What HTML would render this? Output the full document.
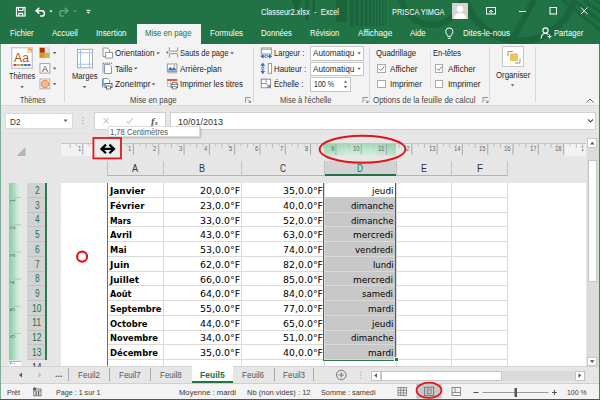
<!DOCTYPE html>
<html><head><meta charset="utf-8"><title>Classeur2.xlsx - Excel</title>
<style>
html,body{margin:0;padding:0}
body{width:600px;height:400px;overflow:hidden;position:relative;background:#e6e6e6;font-family:'Liberation Sans', sans-serif;}
.a{position:absolute;box-sizing:border-box}
.t{position:absolute;white-space:pre;transform-origin:0 50%;line-height:normal}
svg{position:absolute;overflow:visible}
</style></head><body>
<div class="a" style="left:0px;top:0px;width:600px;height:44px;background:#217346;"></div>
<svg style="left:0;top:0" width="600" height="44" viewBox="0 0 600 44"><g fill="#1a6039" opacity=".8"><rect x="305" y="0" width="4" height="20"/><rect x="312.5" y="0" width="2.5" height="13"/><rect x="336" y="0" width="11" height="22"/><rect x="350" y="0" width="3.5" height="26"/><rect x="355.5" y="0" width="3" height="26"/><rect x="360.5" y="0" width="2.6" height="26"/><rect x="365" y="0" width="2.3" height="26"/><rect x="369" y="0" width="2" height="26"/><rect x="372.6" y="0" width="1.8" height="26"/><rect x="376" y="0" width="1.5" height="26"/><rect x="379" y="0" width="1.3" height="26"/><rect x="382" y="0" width="1.1" height="26"/><rect x="385" y="0" width="1" height="26"/><path d="M291 0l5.500 11 5.500-11z"/></g><g fill="none" stroke="#1a6039" opacity=".75"><circle cx="520" cy="-15" r="56" stroke-width="7"/><circle cx="432" cy="-6" r="31" stroke-width="6"/><path d="M562 0l38 30M573 0l27 21M584 0l16 12M595 0l5 4" stroke-width="3.500"/><path d="M534 0l-24 44" stroke-width="6"/></g></svg>
<div class="a" style="left:137px;top:24px;width:63.5px;height:21px;background:#f3f3f3;"></div>
<div class="a" style="left:0px;top:44px;width:600px;height:60.5px;background:#f3f3f3;"></div>
<div class="a" style="left:0px;top:104.5px;width:600px;height:1px;background:#d8d8d8;"></div>
<svg style="left:0;top:0" width="600" height="44" viewBox="0 0 600 44">
<g fill="none" stroke="#fff" stroke-width="1.2">
<rect x="16.5" y="7.5" width="8.5" height="8.5"/><path d="M18.5 7.5v3h4.5v-3M18.8 16v-2.6h3.8v2.6"/>
<path d="M39.3 7.800l-3.200 3 3.200 3M36.300 10.800h5.400a2.700 2.600 0 0 1 0 5.200h-1.500" stroke-width="1.500"/>
<path d="M64.700 7.800l3.200 3 -3.200 3M67.700 10.800h-5.400a2.700 2.600 0 0 0 0 5.200h1.500" stroke-width="1.500" opacity=".32"/>
<path d="M86.500 10.300h3.800" stroke-width="1"/>
</g>
<path d="M49.200 10.500h3.400l-1.700 2.100z" fill="#fff"/>
<path d="M73.300 10.500h3.200l-1.600 2z" fill="#fff" opacity=".32"/>
<path d="M86.500 11.800h3.800l-1.900 2z" fill="#fff"/>
<!-- avatar -->
<rect x="452" y="3" width="16" height="16" fill="#d4d4d4"/>
<circle cx="460" cy="9" r="3.200" fill="#fff"/><path d="M454 19c0-4 2.500-6 6-6s6 2 6 6z" fill="#fff"/>
<!-- ribbon display -->
<g fill="none" stroke="#fff" stroke-width="1"><rect x="486.500" y="7.500" width="9" height="6.500"/><path d="M489 12l2-2 2 2M491 10v3.500" /></g>
<path d="M519 11.500h7" stroke="#fff" stroke-width="1"/>
<rect x="550" y="7.500" width="6.500" height="6.500" fill="none" stroke="#fff" stroke-width="1"/>
<path d="M581 7.500l6.500 6.500M587.500 7.500l-6.500 6.500" stroke="#fff" stroke-width="1"/>
<!-- bulb -->
<g fill="none" stroke="#fff" stroke-width="1"><path d="M447.700 36.300c-.2-1.500-2-2.700-2-4.800a3.600 3.600 0 0 1 7.200 0c0 2.100-1.800 3.300-2 4.800zM447.900 38.300h2.800"/></g>
<!-- share -->
<g fill="none" stroke="#fff" stroke-width="1.100"><circle cx="545.500" cy="30.500" r="2.600"/><path d="M541.200 38.500c0-3 1.800-5 4.300-5 1.200 0 2.200.4 3 1.200M549.500 34.500v4M547.500 36.500h4"/></g>
</svg>
<div class="a" style="left:429.5px;top:50px;width:1px;height:37px;background:#dedede;"></div>
<div class="a" style="left:64px;top:47px;width:1px;height:55px;background:#d8d8d8;"></div>
<div class="a" style="left:252.5px;top:47px;width:1px;height:55px;background:#d8d8d8;"></div>
<div class="a" style="left:368.7px;top:47px;width:1px;height:55px;background:#d8d8d8;"></div>
<div class="a" style="left:489px;top:47px;width:1px;height:55px;background:#d8d8d8;"></div>
<div class="a" style="left:535px;top:47px;width:1px;height:55px;background:#d8d8d8;"></div>
<div class="a" style="left:310px;top:46px;width:54px;height:14.5px;background:#fff;border:1px solid #c6c6c6;"></div>
<div class="a" style="left:310px;top:61.5px;width:54px;height:14.5px;background:#fff;border:1px solid #c6c6c6;"></div>
<div class="a" style="left:310px;top:77px;width:41px;height:14.5px;background:#fff;border:1px solid #c6c6c6;"></div>
<div class="a" style="left:377px;top:64.3px;width:8.6px;height:8.7px;background:#fff;border:1px solid #ababab;"></div>
<div class="a" style="left:377px;top:79.5px;width:8.6px;height:8.7px;background:#fff;border:1px solid #ababab;"></div>
<div class="a" style="left:434.75px;top:64.3px;width:8.6px;height:8.7px;background:#fff;border:1px solid #ababab;"></div>
<div class="a" style="left:434.75px;top:79.5px;width:8.6px;height:8.7px;background:#fff;border:1px solid #ababab;"></div>
<div class="a" style="left:502px;top:46px;width:22px;height:20.5px;background:#fdfdfd;border:1px solid #c6c6c6;"></div>
<svg style="left:0;top:44px" width="600" height="62" viewBox="0 44 600 62">
<!-- dropdown arrows -->
<g fill="#666">
<path d="M20.300 86h3.600l-1.800 2.200z"/><path d="M82.700 86h3.600l-1.800 2.200z"/>
<path d="M52.800 52h3.600l-1.800 2.200z"/><path d="M52.800 67.500h3.600l-1.800 2.200z"/><path d="M52.800 83h3.600l-1.800 2.200z"/>
<path d="M156.300 52.300h3.600l-1.800 2.200z"/><path d="M134 67.500h3.600l-1.800 2.200z"/><path d="M151.800 83.200h3.600l-1.800 2.200z"/>
<path d="M230.300 52.300h3.600l-1.800 2.200z"/>
<path d="M357.300 52.300h3.600l-1.800 2.200z"/><path d="M357.300 67.800h3.600l-1.800 2.200z"/>
<path d="M343.800 82.800h3.400l-1.700-2.200z"/><path d="M343.800 86h3.400l-1.700 2.200z"/>
<path d="M510.800 84.300h3.600l-1.800 2.200z"/>
</g>
<!-- Themes big icon -->
<rect x="11.700" y="47.700" width="20.600" height="20.600" fill="#fff" stroke="#c3c9d6" stroke-width="1.400"/>
<path d="M27.500 48.400h4.100v4.100z" fill="#f0922a"/><path d="M27.500 48.400v4.100h4.100" fill="#fbe0c0" stroke="#e8a868" stroke-width=".5"/>
<text x="14" y="62" font-family="Liberation Sans, sans-serif" font-size="12.500" fill="#b5522d" textLength="15" lengthAdjust="spacingAndGlyphs">Aa</text>
<g><rect x="13.500" y="64" width="3" height="2" fill="#d04030"/><rect x="17" y="64" width="3" height="2" fill="#f0a030"/><rect x="20.500" y="64" width="3" height="2" fill="#50a050"/><rect x="24" y="64" width="3" height="2" fill="#4080c0"/><rect x="27.500" y="64" width="3" height="2" fill="#8050a0"/></g>
<!-- colors -->
<rect x="39.700" y="47.800" width="10" height="10" fill="#e2dfd6" stroke="#c8c4b8" stroke-width=".5"/>
<rect x="39.700" y="47.800" width="5" height="5" fill="#9c3a10"/><rect x="44.700" y="52.800" width="5" height="5" fill="#c4b468"/><rect x="39.700" y="52.800" width="5" height="5" fill="#e8900c"/>
<!-- fonts -->
<rect x="40" y="63.600" width="9.800" height="9.500" fill="#fff" stroke="#9aa4b8" stroke-width="1"/>
<text x="42" y="71.800" font-family="Liberation Sans, sans-serif" font-size="9" fill="#23407a">A</text><path d="M42.300 71.800l1-2.500M47.600 71.800l-1-2.500" stroke="#e8900c" stroke-width="1"/>
<!-- effects -->
<rect x="40" y="79" width="9.800" height="9.800" fill="#fff" stroke="#a8b0c0" stroke-width="1"/>
<circle cx="45" cy="84" r="3.800" fill="#f6b888" stroke="#e8883c" stroke-width="1"/>
<!-- Marges -->
<rect x="77.500" y="49.300" width="15" height="18.500" fill="#fff" stroke="#a0a0a0" stroke-width=".9"/>
<path d="M80.500 49.500v18M89.500 49.500v18M77.500 52.800h15M77.500 64.300h15" stroke="#a4c4ea" stroke-width="1.100"/>
<!-- orientation -->
<path d="M103 48h4.500l2 2v6.500h-6.500z" fill="#fff" stroke="#8a8a8a" stroke-width=".9"/><path d="M105.500 52.500h7v5.500h-7z" fill="#fff" stroke="#8a8a8a" stroke-width=".9"/>
<!-- taille -->
<path d="M104.500 64.500h5l2 2v7h-7z" fill="#fff" stroke="#8a8a8a" stroke-width=".9"/><path d="M103 63.200v10.200M103 63.200h9" stroke="#3a78c8" stroke-width="1" stroke-dasharray="1.300 .7"/>
<!-- zone impr -->
<path d="M103 78.500h4.500l2 2v4h-6.500z" fill="#fff" stroke="#8a8a8a" stroke-width=".9"/><path d="M102.800 79v8.500" stroke="#3a78c8" stroke-width="1"/><rect x="105" y="83.500" width="7" height="4" fill="#fff" stroke="#555" stroke-width=".9"/><rect x="106.500" y="86" width="4" height="3" fill="#fff" stroke="#555" stroke-width=".8"/>
<!-- sauts -->
<path d="M169.300 47.300v3.800h8.400v-3.800M169.300 57.500v-3.800h8.400v3.800" fill="none" stroke="#8a8a8a" stroke-width=".9"/><path d="M166.600 50.900l2.200 1.500-2.200 1.500z" fill="#2a6ed0"/>
<!-- arriere plan -->
<rect x="167.300" y="64" width="9.600" height="7.400" fill="#fff" stroke="#8a8a8a" stroke-width=".9"/><path d="M168.200 70.600v-1.200l2.200-2.600 1.800 2 1.600-1.800 2.300 2.600v1z" fill="#2a78c8"/><circle cx="174.300" cy="66" r=".9" fill="#f0a030"/><path d="M167.300 72.800h9.600" stroke="#9a9a9a" stroke-width=".9"/>
<!-- imprimer titres -->
<rect x="167.300" y="79.300" width="9.600" height="7" fill="#fff" stroke="#b0b0b0" stroke-width=".7"/><rect x="167" y="79" width="10.200" height="2" fill="#e0603a"/><path d="M167.300 83.500h9.600M170.500 81v5.300M173.700 81v5.300" stroke="#b0b0b0" stroke-width=".7"/>
<rect x="171.200" y="84.200" width="6.400" height="3.400" fill="#fff" stroke="#6a6a6a" stroke-width=".9"/><rect x="172.600" y="82.600" width="3.600" height="1.800" fill="#fff" stroke="#6a6a6a" stroke-width=".7"/><rect x="172.600" y="86.400" width="3.600" height="2.500" fill="#fff" stroke="#6a6a6a" stroke-width=".7"/>
<!-- largeur -->
<rect x="261.300" y="48" width="10" height="6" fill="#fff" stroke="#8a8a8a" stroke-width=".9"/><path d="M261.300 49.300h10" stroke="#8a8a8a" stroke-width=".8"/>
<path d="M263 56.300h7" stroke="#2a6ed0" stroke-width="1"/><path d="M260.300 56.300l3.200-2.400v4.800zM272.300 56.300l-3.200-2.400v4.800z" fill="#2a6ed0"/><rect x="265.200" y="55.200" width="2.200" height="2.200" fill="#fff" stroke="#2a6ed0" stroke-width=".6"/>
<!-- hauteur -->
<rect x="268.200" y="63.600" width="3.400" height="9.700" fill="#fff" stroke="#8a8a8a" stroke-width=".9"/>
<path d="M262.800 65v7" stroke="#2a6ed0" stroke-width="1"/><path d="M262.800 62.600l-2.400 3.200h4.800zM262.800 74.200l-2.400-3.200h4.800z" fill="#2a6ed0"/><rect x="261.700" y="67.300" width="2.200" height="2.200" fill="#fff" stroke="#2a6ed0" stroke-width=".6"/>
<!-- echelle -->
<rect x="261.300" y="79.200" width="9.300" height="8.600" fill="#fff" stroke="#8a8a8a" stroke-width=".9"/><rect x="261.300" y="79.200" width="4.800" height="4.400" fill="#fff" stroke="#8a8a8a" stroke-width=".9"/><path d="M266.800 84.200l2.600 2.600M269.700 84.600v2.500h-2.500" stroke="#2a6ed0" stroke-width="1" fill="none"/>
<!-- launchers -->
<g fill="none" stroke="#777" stroke-width=".8"><path d="M245.500 102.500v-5h5M247.500 99.500l3 3M250.500 100.500v2h-2"/><path d="M363 102.500v-5h5M365 99.500l3 3M368 100.500v2h-2"/><path d="M483 102.500v-5h5M485 99.500l3 3M488 100.500v2h-2"/></g>
<!-- check marks -->
<g fill="none" stroke="#7a7a7a" stroke-width="1"><path d="M379 68.600l1.900 1.900 3.300-4"/><path d="M436.700 68.600l1.900 1.900 3.300-4"/></g>
<!-- organiser icon -->
<rect x="510" y="53.500" width="8" height="7.500" fill="#f0c060"/><path d="M508 56v-4.500h5M520 58.500v4.500h-5" fill="none" stroke="#8a8a8a" stroke-width=".9"/>
<!-- collapse caret -->
<path d="M586.500 102.500l3.500-3.500 3.500 3.500" fill="none" stroke="#666" stroke-width="1"/>
</svg>
<div class="a" style="left:5px;top:112.5px;width:67.5px;height:16.7px;background:#fff;border:1px solid #dadada;"></div>
<div class="a" style="left:93.5px;top:112px;width:72.5px;height:17.5px;background:#fff;border:1px solid #d0d0d0;"></div>
<div class="a" style="left:170px;top:112px;width:425.5px;height:17.5px;background:#fff;border:1px solid #d0d0d0;"></div>
<svg style="left:0;top:106px" width="600" height="34" viewBox="0 106 600 34">
<path d="M63.500 119.500h4.200l-2.100 2.500z" fill="#666"/>
<g fill="#999"><rect x="82.500" y="117" width="1" height="1"/><rect x="82.500" y="120" width="1" height="1"/><rect x="82.500" y="123" width="1" height="1"/></g>
<path d="M103.500 118l5 5.500M108.500 118l-5 5.500" stroke="#b8b8b8" stroke-width="1" fill="none"/>
<path d="M126.500 121l2 2.500 4.500-5.500" stroke="#b8b8b8" stroke-width="1" fill="none"/>
<text x="151" y="124.500" font-family="Liberation Serif, serif" font-style="italic" font-size="10.500" font-weight="bold" fill="#555">f</text><text x="154.500" y="125" font-family="Liberation Serif, serif" font-style="italic" font-size="7" font-weight="bold" fill="#555">x</text>
<path d="M588 119.500l2.500 2.500 2.500-2.500" stroke="#555" stroke-width="1.200" fill="none"/>
</svg>
<div class="a" style="left:0px;top:133px;width:600px;height:1px;background:#e1e1e1;"></div>
<div class="a" style="left:61px;top:182.5px;width:524.5px;height:183px;background:#fff;"></div>
<div class="a" style="left:61px;top:143px;width:524.5px;height:1px;background:#c4c4c4;"></div>
<div class="a" style="left:61px;top:144px;width:46.5px;height:12px;background:#f2f2f2;"></div>
<div class="a" style="left:564px;top:144px;width:21.5px;height:12px;background:#f2f2f2;"></div>
<div class="a" style="left:324px;top:144px;width:71.6px;height:11.5px;background:linear-gradient(180deg,rgba(140,208,166,.55) 0%,rgba(226,242,232,.6) 100%),linear-gradient(90deg,#8ed1a8 0%,#c2e6d0 30%,#d0ecdb 50%,#c2e6d0 70%,#8ed1a8 100%);"></div>
<svg style="left:0;top:0" width="600" height="160" viewBox="0 0 600 160"><rect x="69.63" y="144" width="1" height="4" fill="#bdbdbd"/><rect x="75.96" y="144" width="1" height="2.500" fill="#c4c4c4"/><rect x="82.29" y="144" width="1" height="10.800" fill="#a8a8a8"/><rect x="88.62" y="144" width="1" height="2.500" fill="#c4c4c4"/><rect x="94.94" y="144" width="1" height="4" fill="#bdbdbd"/><rect x="101.27" y="144" width="1" height="2.500" fill="#c4c4c4"/><rect x="107.60" y="144" width="1" height="10.800" fill="#a8a8a8"/><rect x="113.93" y="144" width="1" height="2.500" fill="#c4c4c4"/><rect x="120.25" y="144" width="1" height="4" fill="#bdbdbd"/><rect x="126.58" y="144" width="1" height="2.500" fill="#c4c4c4"/><rect x="132.91" y="144" width="1" height="10.800" fill="#a8a8a8"/><rect x="139.24" y="144" width="1" height="2.500" fill="#c4c4c4"/><rect x="145.56" y="144" width="1" height="4" fill="#bdbdbd"/><rect x="151.89" y="144" width="1" height="2.500" fill="#c4c4c4"/><rect x="158.22" y="144" width="1" height="10.800" fill="#a8a8a8"/><rect x="164.55" y="144" width="1" height="2.500" fill="#c4c4c4"/><rect x="170.88" y="144" width="1" height="4" fill="#bdbdbd"/><rect x="177.20" y="144" width="1" height="2.500" fill="#c4c4c4"/><rect x="183.53" y="144" width="1" height="10.800" fill="#a8a8a8"/><rect x="189.86" y="144" width="1" height="2.500" fill="#c4c4c4"/><rect x="196.19" y="144" width="1" height="4" fill="#bdbdbd"/><rect x="202.51" y="144" width="1" height="2.500" fill="#c4c4c4"/><rect x="208.84" y="144" width="1" height="10.800" fill="#a8a8a8"/><rect x="215.17" y="144" width="1" height="2.500" fill="#c4c4c4"/><rect x="221.50" y="144" width="1" height="4" fill="#bdbdbd"/><rect x="227.82" y="144" width="1" height="2.500" fill="#c4c4c4"/><rect x="234.15" y="144" width="1" height="10.800" fill="#a8a8a8"/><rect x="240.48" y="144" width="1" height="2.500" fill="#c4c4c4"/><rect x="246.80" y="144" width="1" height="4" fill="#bdbdbd"/><rect x="253.13" y="144" width="1" height="2.500" fill="#c4c4c4"/><rect x="259.46" y="144" width="1" height="10.800" fill="#a8a8a8"/><rect x="265.79" y="144" width="1" height="2.500" fill="#c4c4c4"/><rect x="272.12" y="144" width="1" height="4" fill="#bdbdbd"/><rect x="278.44" y="144" width="1" height="2.500" fill="#c4c4c4"/><rect x="284.77" y="144" width="1" height="10.800" fill="#a8a8a8"/><rect x="291.10" y="144" width="1" height="2.500" fill="#c4c4c4"/><rect x="297.42" y="144" width="1" height="4" fill="#bdbdbd"/><rect x="303.75" y="144" width="1" height="2.500" fill="#c4c4c4"/><rect x="310.08" y="144" width="1" height="10.800" fill="#a8a8a8"/><rect x="316.41" y="144" width="1" height="2.500" fill="#c4c4c4"/><rect x="322.74" y="144" width="1" height="4" fill="#bdbdbd"/><rect x="329.06" y="144" width="1" height="2.500" fill="#c4c4c4"/><rect x="335.39" y="144" width="1" height="10.800" fill="#a8a8a8"/><rect x="341.72" y="144" width="1" height="2.500" fill="#c4c4c4"/><rect x="348.04" y="144" width="1" height="4" fill="#bdbdbd"/><rect x="354.37" y="144" width="1" height="2.500" fill="#c4c4c4"/><rect x="360.70" y="144" width="1" height="10.800" fill="#a8a8a8"/><rect x="367.03" y="144" width="1" height="2.500" fill="#c4c4c4"/><rect x="373.36" y="144" width="1" height="4" fill="#bdbdbd"/><rect x="379.68" y="144" width="1" height="2.500" fill="#c4c4c4"/><rect x="386.01" y="144" width="1" height="10.800" fill="#a8a8a8"/><rect x="392.34" y="144" width="1" height="2.500" fill="#c4c4c4"/><rect x="398.66" y="144" width="1" height="4" fill="#bdbdbd"/><rect x="404.99" y="144" width="1" height="2.500" fill="#c4c4c4"/><rect x="411.32" y="144" width="1" height="10.800" fill="#a8a8a8"/><rect x="417.65" y="144" width="1" height="2.500" fill="#c4c4c4"/><rect x="423.98" y="144" width="1" height="4" fill="#bdbdbd"/><rect x="430.30" y="144" width="1" height="2.500" fill="#c4c4c4"/><rect x="436.63" y="144" width="1" height="10.800" fill="#a8a8a8"/><rect x="442.96" y="144" width="1" height="2.500" fill="#c4c4c4"/><rect x="449.28" y="144" width="1" height="4" fill="#bdbdbd"/><rect x="455.61" y="144" width="1" height="2.500" fill="#c4c4c4"/><rect x="461.94" y="144" width="1" height="10.800" fill="#a8a8a8"/><rect x="468.27" y="144" width="1" height="2.500" fill="#c4c4c4"/><rect x="474.60" y="144" width="1" height="4" fill="#bdbdbd"/><rect x="480.92" y="144" width="1" height="2.500" fill="#c4c4c4"/><rect x="487.25" y="144" width="1" height="10.800" fill="#a8a8a8"/><rect x="493.58" y="144" width="1" height="2.500" fill="#c4c4c4"/><rect x="499.90" y="144" width="1" height="4" fill="#bdbdbd"/><rect x="506.23" y="144" width="1" height="2.500" fill="#c4c4c4"/><rect x="512.56" y="144" width="1" height="10.800" fill="#a8a8a8"/><rect x="518.89" y="144" width="1" height="2.500" fill="#c4c4c4"/><rect x="525.21" y="144" width="1" height="4" fill="#bdbdbd"/><rect x="531.54" y="144" width="1" height="2.500" fill="#c4c4c4"/><rect x="537.87" y="144" width="1" height="10.800" fill="#a8a8a8"/><rect x="544.20" y="144" width="1" height="2.500" fill="#c4c4c4"/><rect x="550.52" y="144" width="1" height="4" fill="#bdbdbd"/><rect x="556.85" y="144" width="1" height="2.500" fill="#c4c4c4"/><rect x="563.18" y="144" width="1" height="10.800" fill="#a8a8a8"/><rect x="569.51" y="144" width="1" height="2.500" fill="#c4c4c4"/><rect x="575.83" y="144" width="1" height="4" fill="#bdbdbd"/><rect x="582.16" y="144" width="1" height="2.500" fill="#c4c4c4"/></svg>
<svg style="left:0;top:140px" width="40" height="20" viewBox="0 140 40 20"><path d="M25.500 147v9h-9z" fill="#b4b4b4"/></svg>
<div class="a" style="left:106.5px;top:160.5px;width:401.5px;height:15.5px;background:#e6e6e6;border-bottom:1px solid #b4b4b4;border-left:1px solid #c2c2c2;"></div>
<div class="a" style="left:162.5px;top:161px;width:1px;height:14.5px;background:#c2c2c2;"></div>
<div class="a" style="left:240.75px;top:161px;width:1px;height:14.5px;background:#c2c2c2;"></div>
<div class="a" style="left:324.0px;top:161px;width:1px;height:14.5px;background:#c2c2c2;"></div>
<div class="a" style="left:324.5px;top:160.5px;width:71.5px;height:15.5px;background:#d2d2d2;"></div>
<div class="a" style="left:324.5px;top:174.4px;width:71.5px;height:1.7px;background:#217346;"></div>
<div class="a" style="left:395.5px;top:161px;width:1px;height:14.5px;background:#c2c2c2;"></div>
<div class="a" style="left:451.0px;top:161px;width:1px;height:14.5px;background:#c2c2c2;"></div>
<div class="a" style="left:507.0px;top:161px;width:1px;height:14.5px;background:#c2c2c2;"></div>
<div class="a" style="left:8.5px;top:182.5px;width:12.3px;height:177.3px;background:linear-gradient(90deg,#86cca3 0%,#a6dabc 35%,#cfe8d9 70%,#e2ebe5 100%);"></div>
<div class="a" style="left:27.4px;top:182.5px;width:18.5px;height:177px;background:#d2d2d2;"></div>
<div class="a" style="left:8.5px;top:361px;width:12.3px;height:5px;background:#fff;"></div>
<div class="a" style="left:8.5px;top:360.7px;width:12.3px;height:1px;background:#b0b0b0;"></div>
<div class="a" style="left:45.4px;top:182.5px;width:1.7px;height:177px;background:#2a7a50;"></div>
<div class="a" style="left:27.4px;top:196.92999999999998px;width:18px;height:1px;background:#c2c2c2;"></div>
<div class="a" style="left:27.4px;top:211.66px;width:18px;height:1px;background:#c2c2c2;"></div>
<div class="a" style="left:27.4px;top:226.39px;width:18px;height:1px;background:#c2c2c2;"></div>
<div class="a" style="left:27.4px;top:241.12px;width:18px;height:1px;background:#c2c2c2;"></div>
<div class="a" style="left:27.4px;top:255.85000000000002px;width:18px;height:1px;background:#c2c2c2;"></div>
<div class="a" style="left:27.4px;top:270.58px;width:18px;height:1px;background:#c2c2c2;"></div>
<div class="a" style="left:27.4px;top:285.31px;width:18px;height:1px;background:#c2c2c2;"></div>
<div class="a" style="left:27.4px;top:300.03999999999996px;width:18px;height:1px;background:#c2c2c2;"></div>
<div class="a" style="left:27.4px;top:314.77px;width:18px;height:1px;background:#c2c2c2;"></div>
<div class="a" style="left:27.4px;top:329.5px;width:18px;height:1px;background:#c2c2c2;"></div>
<div class="a" style="left:27.4px;top:344.23px;width:18px;height:1px;background:#c2c2c2;"></div>
<div class="a" style="left:27.4px;top:358.96px;width:18px;height:1px;background:#c2c2c2;"></div>
<svg style="left:0;top:0" width="60" height="364" viewBox="0 0 60 364"><rect x="8.500" y="183.40" width="5" height="1" fill="#b4c8bd"/><rect x="8.500" y="197.00" width="12.300" height="1" fill="#b4c4bb"/><rect x="8.500" y="210.60" width="5" height="1" fill="#b4c8bd"/><rect x="8.500" y="224.20" width="12.300" height="1" fill="#b4c4bb"/><rect x="8.500" y="237.80" width="5" height="1" fill="#b4c8bd"/><rect x="8.500" y="251.40" width="12.300" height="1" fill="#b4c4bb"/><rect x="8.500" y="265.00" width="5" height="1" fill="#b4c8bd"/><rect x="8.500" y="278.60" width="12.300" height="1" fill="#b4c4bb"/><rect x="8.500" y="292.20" width="5" height="1" fill="#b4c8bd"/><rect x="8.500" y="305.80" width="12.300" height="1" fill="#b4c4bb"/><rect x="8.500" y="319.40" width="5" height="1" fill="#b4c8bd"/><rect x="8.500" y="333.00" width="12.300" height="1" fill="#b4c4bb"/><rect x="8.500" y="346.60" width="5" height="1" fill="#b4c8bd"/></svg>
<div class="a" style="left:162.5px;top:182.5px;width:1px;height:183px;background:#dadada;"></div>
<div class="a" style="left:240.75px;top:182.5px;width:1px;height:183px;background:#dadada;"></div>
<div class="a" style="left:324.0px;top:182.5px;width:1px;height:183px;background:#dadada;"></div>
<div class="a" style="left:395.5px;top:182.5px;width:1px;height:183px;background:#dadada;"></div>
<div class="a" style="left:451.0px;top:182.5px;width:1px;height:183px;background:#dadada;"></div>
<div class="a" style="left:507.0px;top:182.5px;width:1px;height:183px;background:#dadada;"></div>
<div class="a" style="left:106.8px;top:182.5px;width:1px;height:183px;background:#6e6e6e;"></div>
<div class="a" style="left:107.5px;top:196.92999999999998px;width:400px;height:1px;background:#dadada;"></div>
<div class="a" style="left:107.5px;top:211.66px;width:400px;height:1px;background:#dadada;"></div>
<div class="a" style="left:107.5px;top:226.39px;width:400px;height:1px;background:#dadada;"></div>
<div class="a" style="left:107.5px;top:241.12px;width:400px;height:1px;background:#dadada;"></div>
<div class="a" style="left:107.5px;top:255.85000000000002px;width:400px;height:1px;background:#dadada;"></div>
<div class="a" style="left:107.5px;top:270.58px;width:400px;height:1px;background:#dadada;"></div>
<div class="a" style="left:107.5px;top:285.31px;width:400px;height:1px;background:#dadada;"></div>
<div class="a" style="left:107.5px;top:300.03999999999996px;width:400px;height:1px;background:#dadada;"></div>
<div class="a" style="left:107.5px;top:314.77px;width:400px;height:1px;background:#dadada;"></div>
<div class="a" style="left:107.5px;top:329.5px;width:400px;height:1px;background:#dadada;"></div>
<div class="a" style="left:107.5px;top:344.23px;width:400px;height:1px;background:#dadada;"></div>
<div class="a" style="left:107.5px;top:358.96px;width:400px;height:1px;background:#dadada;"></div>
<div class="a" style="left:325px;top:197.42999999999998px;width:71px;height:162.03px;background:#c8c8c8;"></div>
<div class="a" style="left:325px;top:211.66px;width:71px;height:1px;background:#d9d9d9;"></div>
<div class="a" style="left:325px;top:226.39px;width:71px;height:1px;background:#d9d9d9;"></div>
<div class="a" style="left:325px;top:241.12px;width:71px;height:1px;background:#d9d9d9;"></div>
<div class="a" style="left:325px;top:255.85000000000002px;width:71px;height:1px;background:#d9d9d9;"></div>
<div class="a" style="left:325px;top:270.58px;width:71px;height:1px;background:#d9d9d9;"></div>
<div class="a" style="left:325px;top:285.31px;width:71px;height:1px;background:#d9d9d9;"></div>
<div class="a" style="left:325px;top:300.03999999999996px;width:71px;height:1px;background:#d9d9d9;"></div>
<div class="a" style="left:325px;top:314.77px;width:71px;height:1px;background:#d9d9d9;"></div>
<div class="a" style="left:325px;top:329.5px;width:71px;height:1px;background:#d9d9d9;"></div>
<div class="a" style="left:325px;top:344.23px;width:71px;height:1px;background:#d9d9d9;"></div>
<div class="a" style="left:323.2px;top:182.5px;width:73.1px;height:178px;border:2px solid #2a7a4e;border-top:none;border-left-width:1.6px;border-right-width:1.6px;border-bottom-width:1.7px;"></div>
<div class="a" style="left:394px;top:357.2px;width:4.5px;height:4.5px;background:#217346;border:1px solid #fff;"></div>
<div class="a" style="left:108px;top:125.6px;width:92px;height:11.4px;background:#fff;border:1px solid #dcdcdc;box-shadow:1px 1px 2px rgba(0,0,0,.22);"></div>
<div class="a" style="left:586.5px;top:138px;width:12px;height:228.5px;background:#dcdcdc;"></div>
<div class="a" style="left:587.3px;top:138.3px;width:9.7px;height:9.4px;background:#fff;border:1px solid #c6c6c6;"></div>
<div class="a" style="left:587.5px;top:160px;width:9.5px;height:122px;background:#fff;border:1px solid #c6c6c6;"></div>
<div class="a" style="left:587.3px;top:356.8px;width:9.7px;height:9.4px;background:#fff;border:1px solid #c6c6c6;"></div>
<svg style="left:580px;top:130px" width="20" height="240" viewBox="580 130 20 240"><path d="M590 144.500h4.600l-2.300-2.800z" fill="#555"/><path d="M589.800 360.200h4.800l-2.400 2.900z" fill="#555"/></svg>
<div class="a" style="left:0px;top:365.5px;width:600px;height:18px;background:#e6e6e6;"></div>
<div class="a" style="left:0px;top:365.5px;width:600px;height:1px;background:#d2d2d2;"></div>
<div class="a" style="left:191.5px;top:365.5px;width:41px;height:16px;background:#fff;"></div>
<div class="a" style="left:191.5px;top:380.5px;width:41px;height:2px;background:#217346;"></div>
<div class="a" style="left:68px;top:368.3px;width:1px;height:12.7px;background:#ababab;"></div>
<div class="a" style="left:109.25px;top:368.3px;width:1px;height:12.7px;background:#ababab;"></div>
<div class="a" style="left:150px;top:368.3px;width:1px;height:12.7px;background:#ababab;"></div>
<div class="a" style="left:273.75px;top:368.3px;width:1px;height:12.7px;background:#ababab;"></div>
<div class="a" style="left:313px;top:368.3px;width:1px;height:12.7px;background:#ababab;"></div>
<div class="a" style="left:371px;top:370.5px;width:214.5px;height:10px;background:#dadada;"></div>
<div class="a" style="left:371px;top:370.5px;width:9.5px;height:10px;background:#fff;border:1px solid #c6c6c6;"></div>
<div class="a" style="left:381px;top:370.5px;width:121px;height:10px;background:#fff;border:1px solid #c6c6c6;"></div>
<div class="a" style="left:575px;top:370.5px;width:10px;height:10px;background:#fff;border:1px solid #c6c6c6;"></div>
<svg style="left:0;top:364px" width="600" height="36" viewBox="0 364 600 36">
<path d="M22 372.500v5l-3-2.500z" fill="#217346"/><path d="M38.500 372.500v5l3-2.500z" fill="#bdbdbd"/>
<circle cx="341.250" cy="375" r="4.800" fill="none" stroke="#777" stroke-width="1"/><path d="M338.500 375h5.500M341.250 372.300v5.500" stroke="#777" stroke-width="1"/>
<g fill="#999"><rect x="360.300" y="371.500" width="1" height="1"/><rect x="360.300" y="374.500" width="1" height="1"/><rect x="360.300" y="377.500" width="1" height="1"/></g>
<path d="M377 373.200v4.600l-2.800-2.300z" fill="#555"/><path d="M578.500 373.200v4.600l2.800-2.300z" fill="#555"/>
</svg>
<div class="a" style="left:0px;top:383px;width:600px;height:15.5px;background:#f3f3f3;"></div>
<div class="a" style="left:0px;top:382.5px;width:600px;height:1px;background:#d0d0d0;"></div>
<svg style="left:0;top:383px" width="600" height="17" viewBox="0 383 600 17">
<g fill="none" stroke="#7c7c7c" stroke-width=".85">
<rect x="33.800" y="389" width="7.200" height="6.800" stroke="#666"/><path d="M33.800 391h7.200" stroke="#666"/><path d="M36.200 391.500v4M38.600 391.500v4" stroke="#555" stroke-width="1.200"/><circle cx="34.600" cy="388.700" r="1.500" fill="#555" stroke="none"/>
<rect x="398" y="387.500" width="8.500" height="8"/><path d="M398 390.200h8.500M398 392.900h8.500M400.800 387.500v8M403.600 387.500v8"/>
<rect x="452" y="387.500" width="8.500" height="8"/><path d="M455 387.500v5M452 392.500h8.500"/>
</g>
<rect x="416.300" y="384" width="25.400" height="14.500" fill="#c8c8c8"/>
<rect x="424.600" y="387.300" width="9" height="8.200" fill="#cdcdcd" stroke="#6e6e6e" stroke-width=".9"/>
<rect x="427.200" y="389.200" width="3.900" height="4.600" fill="#d6d6d6" stroke="#6e6e6e" stroke-width=".8"/><path d="M429.150 390.500v2" stroke="#6e6e6e" stroke-width=".8"/>
<path d="M473.500 392.500h5" stroke="#555" stroke-width="1"/>
<path d="M482.500 392.500h66" stroke="#999" stroke-width="1"/>
<rect x="514.500" y="388" width="2.500" height="9" fill="#555"/>
<path d="M552 392.500h5M554.500 390v5" stroke="#555" stroke-width="1"/>
</svg>
<div class="a" style="left:0px;top:44px;width:1.2px;height:356px;background:#7fae98;"></div>
<div class="a" style="left:598.8px;top:44px;width:1.2px;height:356px;background:#3a8a5c;"></div>
<div class="a" style="left:0px;top:398.5px;width:600px;height:1.5px;background:#217346;"></div>
<svg style="left:0;top:0" width="600" height="400" viewBox="0 0 600 400">
<rect x="93.400" y="138" width="27.600" height="20.400" fill="#e9eded" stroke="#e3141c" stroke-width="1.800"/>
<path d="M106 144.600l-4.600 4.300 4.600 4.300M109.400 144.600l4.600 4.300-4.600 4.300M102 148.900h11.500" fill="none" stroke="#000" stroke-width="2.200" stroke-linejoin="miter"/>
<ellipse cx="362.500" cy="149.250" rx="43" ry="13.500" fill="none" stroke="#e3141c" stroke-width="2"/>
<circle cx="82.100" cy="256.600" r="5" fill="none" stroke="#e3141c" stroke-width="2.100"/>
<ellipse cx="429" cy="390.300" rx="12.500" ry="7.600" fill="none" stroke="#e3141c" stroke-width="1.700"/>
</svg>
<span class="t" style="left:261.00px;top:7.00px;font-family:'Liberation Sans', sans-serif;font-size:8.5px;font-weight:normal;color:#fff;transform:scaleX(0.8829);">Classeur2.xlsx  -  Excel</span>
<span class="t" style="left:392.00px;top:7.00px;font-family:'Liberation Sans', sans-serif;font-size:8.5px;font-weight:normal;color:#fff;transform:scaleX(0.8638);">PRISCA YIMGA</span>
<span class="t" style="left:10.00px;top:28.00px;font-family:'Liberation Sans', sans-serif;font-size:8.5px;font-weight:normal;color:#fff;transform:scaleX(0.9308);">Fichier</span>
<span class="t" style="left:51.75px;top:28.00px;font-family:'Liberation Sans', sans-serif;font-size:8.5px;font-weight:normal;color:#fff;transform:scaleX(0.9396);">Accueil</span>
<span class="t" style="left:95.75px;top:28.00px;font-family:'Liberation Sans', sans-serif;font-size:8.5px;font-weight:normal;color:#fff;transform:scaleX(0.9353);">Insertion</span>
<span class="t" style="left:209.50px;top:28.00px;font-family:'Liberation Sans', sans-serif;font-size:8.5px;font-weight:normal;color:#fff;transform:scaleX(0.9312);">Formules</span>
<span class="t" style="left:260.75px;top:28.00px;font-family:'Liberation Sans', sans-serif;font-size:8.5px;font-weight:normal;color:#fff;transform:scaleX(0.9109);">Données</span>
<span class="t" style="left:310.00px;top:28.00px;font-family:'Liberation Sans', sans-serif;font-size:8.5px;font-weight:normal;color:#fff;transform:scaleX(0.8970);">Révision</span>
<span class="t" style="left:357.50px;top:28.00px;font-family:'Liberation Sans', sans-serif;font-size:8.5px;font-weight:normal;color:#fff;transform:scaleX(0.9703);">Affichage</span>
<span class="t" style="left:410.00px;top:28.00px;font-family:'Liberation Sans', sans-serif;font-size:8.5px;font-weight:normal;color:#fff;transform:scaleX(0.9256);">Aide</span>
<span class="t" style="left:463.00px;top:28.00px;font-family:'Liberation Sans', sans-serif;font-size:8.5px;font-weight:normal;color:#fff;transform:scaleX(0.9385);">Dites-le-nous</span>
<span class="t" style="left:553.75px;top:28.00px;font-family:'Liberation Sans', sans-serif;font-size:8.5px;font-weight:normal;color:#fff;transform:scaleX(0.8970);">Partager</span>
<span class="t" style="left:145.00px;top:28.00px;font-family:'Liberation Sans', sans-serif;font-size:8.5px;font-weight:normal;color:#217346;transform:scaleX(0.9109);">Mise en page</span>
<span class="t" style="left:8.75px;top:71.00px;font-family:'Liberation Sans', sans-serif;font-size:8.5px;font-weight:normal;color:#1e1e1e;transform:scaleX(0.8545);">Thèmes</span>
<span class="t" style="left:19.50px;top:95.50px;font-family:'Liberation Sans', sans-serif;font-size:8.2px;font-weight:normal;color:#444;transform:scaleX(0.8621);">Thèmes</span>
<span class="t" style="left:72.00px;top:71.00px;font-family:'Liberation Sans', sans-serif;font-size:8.5px;font-weight:normal;color:#1e1e1e;transform:scaleX(0.8997);">Marges</span>
<span class="t" style="left:114.50px;top:48.40px;font-family:'Liberation Sans', sans-serif;font-size:8.5px;font-weight:normal;color:#1e1e1e;transform:scaleX(0.9497);">Orientation</span>
<span class="t" style="left:114.50px;top:63.60px;font-family:'Liberation Sans', sans-serif;font-size:8.5px;font-weight:normal;color:#1e1e1e;transform:scaleX(0.9032);">Taille</span>
<span class="t" style="left:114.50px;top:79.00px;font-family:'Liberation Sans', sans-serif;font-size:8.5px;font-weight:normal;color:#1e1e1e;transform:scaleX(0.9759);">ZoneImpr</span>
<span class="t" style="left:180.00px;top:48.40px;font-family:'Liberation Sans', sans-serif;font-size:8.5px;font-weight:normal;color:#1e1e1e;transform:scaleX(0.8809);">Sauts de page</span>
<span class="t" style="left:180.00px;top:63.50px;font-family:'Liberation Sans', sans-serif;font-size:8.5px;font-weight:normal;color:#1e1e1e;transform:scaleX(0.9402);">Arrière-plan</span>
<span class="t" style="left:180.00px;top:79.00px;font-family:'Liberation Sans', sans-serif;font-size:8.5px;font-weight:normal;color:#1e1e1e;transform:scaleX(0.9327);">Imprimer les titres</span>
<span class="t" style="left:130.00px;top:95.50px;font-family:'Liberation Sans', sans-serif;font-size:8.2px;font-weight:normal;color:#444;transform:scaleX(0.9457);">Mise en page</span>
<span class="t" style="left:273.75px;top:48.40px;font-family:'Liberation Sans', sans-serif;font-size:8.5px;font-weight:normal;color:#1e1e1e;transform:scaleX(0.8889);">Largeur :</span>
<span class="t" style="left:273.75px;top:63.50px;font-family:'Liberation Sans', sans-serif;font-size:8.5px;font-weight:normal;color:#1e1e1e;transform:scaleX(0.9223);">Hauteur :</span>
<span class="t" style="left:273.75px;top:79.00px;font-family:'Liberation Sans', sans-serif;font-size:8.5px;font-weight:normal;color:#1e1e1e;transform:scaleX(0.8970);">Échelle :</span>
<span class="t" style="left:280.00px;top:95.50px;font-family:'Liberation Sans', sans-serif;font-size:8.2px;font-weight:normal;color:#444;transform:scaleX(0.9243);">Mise à l'échelle</span>
<span class="t" style="left:375.75px;top:48.40px;font-family:'Liberation Sans', sans-serif;font-size:8.5px;font-weight:normal;color:#1e1e1e;transform:scaleX(0.9256);">Quadrillage</span>
<span class="t" style="left:390.00px;top:63.50px;font-family:'Liberation Sans', sans-serif;font-size:8.5px;font-weight:normal;color:#1e1e1e;transform:scaleX(0.9591);">Afficher</span>
<span class="t" style="left:390.00px;top:79.00px;font-family:'Liberation Sans', sans-serif;font-size:8.5px;font-weight:normal;color:#1e1e1e;transform:scaleX(0.9543);">Imprimer</span>
<span class="t" style="left:433.00px;top:48.40px;font-family:'Liberation Sans', sans-serif;font-size:8.5px;font-weight:normal;color:#1e1e1e;transform:scaleX(0.8845);">En-têtes</span>
<span class="t" style="left:447.50px;top:63.50px;font-family:'Liberation Sans', sans-serif;font-size:8.5px;font-weight:normal;color:#1e1e1e;transform:scaleX(0.9591);">Afficher</span>
<span class="t" style="left:447.50px;top:79.00px;font-family:'Liberation Sans', sans-serif;font-size:8.5px;font-weight:normal;color:#1e1e1e;transform:scaleX(0.9692);">Imprimer</span>
<span class="t" style="left:373.00px;top:95.50px;font-family:'Liberation Sans', sans-serif;font-size:8.2px;font-weight:normal;color:#444;transform:scaleX(0.9623);">Options de la feuille de calcul</span>
<span class="t" style="left:495.75px;top:70.00px;font-family:'Liberation Sans', sans-serif;font-size:8.5px;font-weight:normal;color:#1e1e1e;transform:scaleX(0.9175);">Organiser</span>
<span class="t" style="left:312.50px;top:48.30px;font-family:'Liberation Sans', sans-serif;font-size:8.5px;font-weight:normal;color:#1e1e1e;transform:scaleX(0.9593);">Automatiqu</span>
<span class="t" style="left:312.50px;top:63.80px;font-family:'Liberation Sans', sans-serif;font-size:8.5px;font-weight:normal;color:#1e1e1e;transform:scaleX(0.9593);">Automatiqu</span>
<span class="t" style="left:314.00px;top:79.30px;font-family:'Liberation Sans', sans-serif;font-size:8.5px;font-weight:normal;color:#1e1e1e;transform:scaleX(0.8296);">100 %</span>
<span class="t" style="left:9.80px;top:116.50px;font-family:'Liberation Sans', sans-serif;font-size:9px;font-weight:normal;color:#333;transform:scaleX(0.9118);">D2</span>
<span class="t" style="left:177.50px;top:116.50px;font-family:'Liberation Sans', sans-serif;font-size:9px;font-weight:normal;color:#333;transform:scaleX(0.9990);">10/01/2013</span>
<span class="t" style="left:128.11px;top:145.00px;font-family:'Liberation Sans', sans-serif;font-size:6.5px;font-weight:normal;color:#666;transform:scaleX(0.9103);">1</span>
<span class="t" style="left:153.42px;top:145.00px;font-family:'Liberation Sans', sans-serif;font-size:6.5px;font-weight:normal;color:#666;transform:scaleX(0.9103);">2</span>
<span class="t" style="left:178.73px;top:145.00px;font-family:'Liberation Sans', sans-serif;font-size:6.5px;font-weight:normal;color:#666;transform:scaleX(0.9103);">3</span>
<span class="t" style="left:204.04px;top:145.00px;font-family:'Liberation Sans', sans-serif;font-size:6.5px;font-weight:normal;color:#666;transform:scaleX(0.9103);">4</span>
<span class="t" style="left:229.35px;top:145.00px;font-family:'Liberation Sans', sans-serif;font-size:6.5px;font-weight:normal;color:#666;transform:scaleX(0.9103);">5</span>
<span class="t" style="left:254.66px;top:145.00px;font-family:'Liberation Sans', sans-serif;font-size:6.5px;font-weight:normal;color:#666;transform:scaleX(0.9103);">6</span>
<span class="t" style="left:279.97px;top:145.00px;font-family:'Liberation Sans', sans-serif;font-size:6.5px;font-weight:normal;color:#666;transform:scaleX(0.9103);">7</span>
<span class="t" style="left:305.28px;top:145.00px;font-family:'Liberation Sans', sans-serif;font-size:6.5px;font-weight:normal;color:#666;transform:scaleX(0.9103);">8</span>
<span class="t" style="left:330.59px;top:145.00px;font-family:'Liberation Sans', sans-serif;font-size:6.5px;font-weight:normal;color:#666;transform:scaleX(0.9103);">9</span>
<span class="t" style="left:352.60px;top:145.00px;font-family:'Liberation Sans', sans-serif;font-size:6.5px;font-weight:normal;color:#666;transform:scaleX(0.9123);">10</span>
<span class="t" style="left:377.91px;top:145.00px;font-family:'Liberation Sans', sans-serif;font-size:6.5px;font-weight:normal;color:#666;transform:scaleX(0.9778);">11</span>
<span class="t" style="left:403.22px;top:145.00px;font-family:'Liberation Sans', sans-serif;font-size:6.5px;font-weight:normal;color:#666;transform:scaleX(0.9123);">12</span>
<span class="t" style="left:428.53px;top:145.00px;font-family:'Liberation Sans', sans-serif;font-size:6.5px;font-weight:normal;color:#666;transform:scaleX(0.9123);">13</span>
<span class="t" style="left:453.84px;top:145.00px;font-family:'Liberation Sans', sans-serif;font-size:6.5px;font-weight:normal;color:#666;transform:scaleX(0.9123);">14</span>
<span class="t" style="left:479.15px;top:145.00px;font-family:'Liberation Sans', sans-serif;font-size:6.5px;font-weight:normal;color:#666;transform:scaleX(0.9123);">15</span>
<span class="t" style="left:504.46px;top:145.00px;font-family:'Liberation Sans', sans-serif;font-size:6.5px;font-weight:normal;color:#666;transform:scaleX(0.9123);">16</span>
<span class="t" style="left:529.77px;top:145.00px;font-family:'Liberation Sans', sans-serif;font-size:6.5px;font-weight:normal;color:#666;transform:scaleX(0.9123);">17</span>
<span class="t" style="left:555.08px;top:145.00px;font-family:'Liberation Sans', sans-serif;font-size:6.5px;font-weight:normal;color:#666;transform:scaleX(0.9123);">18</span>
<span class="t" style="left:77.69px;top:145.00px;font-family:'Liberation Sans', sans-serif;font-size:6.5px;font-weight:normal;color:#666;transform:scaleX(0.9103);">1</span>
<span class="t" style="left:580.50px;top:145.00px;font-family:'Liberation Sans', sans-serif;font-size:6.5px;font-weight:normal;color:#666;transform:scaleX(0.8276);">1</span>
<span class="t" style="left:132.25px;top:163.00px;font-family:'Liberation Sans', sans-serif;font-size:10px;font-weight:normal;color:#333;transform:scaleX(0.8993);">A</span>
<span class="t" style="left:199.12px;top:163.00px;font-family:'Liberation Sans', sans-serif;font-size:10px;font-weight:normal;color:#333;transform:scaleX(0.8993);">B</span>
<span class="t" style="left:279.88px;top:163.00px;font-family:'Liberation Sans', sans-serif;font-size:10px;font-weight:normal;color:#333;transform:scaleX(0.8294);">C</span>
<span class="t" style="left:357.25px;top:163.00px;font-family:'Liberation Sans', sans-serif;font-size:10px;font-weight:normal;color:#217346;transform:scaleX(0.8294);">D</span>
<span class="t" style="left:420.75px;top:163.00px;font-family:'Liberation Sans', sans-serif;font-size:10px;font-weight:normal;color:#333;transform:scaleX(0.8993);">E</span>
<span class="t" style="left:476.50px;top:163.00px;font-family:'Liberation Sans', sans-serif;font-size:10px;font-weight:normal;color:#333;transform:scaleX(0.9821);">F</span>
<span class="t" style="left:10.64px;top:197.20px;font-family:'Liberation Sans', sans-serif;font-size:6.5px;font-weight:normal;color:#5a6a62;transform-origin:50% 50%;transform:rotate(-90deg) scaleX(0.9103);">1</span>
<span class="t" style="left:10.64px;top:224.40px;font-family:'Liberation Sans', sans-serif;font-size:6.5px;font-weight:normal;color:#5a6a62;transform-origin:50% 50%;transform:rotate(-90deg) scaleX(0.9103);">2</span>
<span class="t" style="left:10.64px;top:251.60px;font-family:'Liberation Sans', sans-serif;font-size:6.5px;font-weight:normal;color:#5a6a62;transform-origin:50% 50%;transform:rotate(-90deg) scaleX(0.9103);">3</span>
<span class="t" style="left:10.64px;top:278.80px;font-family:'Liberation Sans', sans-serif;font-size:6.5px;font-weight:normal;color:#5a6a62;transform-origin:50% 50%;transform:rotate(-90deg) scaleX(0.9103);">4</span>
<span class="t" style="left:10.64px;top:306.00px;font-family:'Liberation Sans', sans-serif;font-size:6.5px;font-weight:normal;color:#5a6a62;transform-origin:50% 50%;transform:rotate(-90deg) scaleX(0.9103);">5</span>
<span class="t" style="left:10.64px;top:333.20px;font-family:'Liberation Sans', sans-serif;font-size:6.5px;font-weight:normal;color:#5a6a62;transform-origin:50% 50%;transform:rotate(-90deg) scaleX(0.9103);">6</span>
<span class="t" style="left:10.64px;top:360.40px;font-family:'Liberation Sans', sans-serif;font-size:6.5px;font-weight:normal;color:#5a6a62;transform-origin:50% 50%;transform:rotate(-90deg) scaleX(0.9103);">7</span>
<span class="t" style="left:34.60px;top:184.87px;font-family:'Liberation Sans', sans-serif;font-size:10px;font-weight:normal;color:#217346;transform:scaleX(0.8270);">2</span>
<span class="t" style="left:34.60px;top:199.59px;font-family:'Liberation Sans', sans-serif;font-size:10px;font-weight:normal;color:#217346;transform:scaleX(0.8270);">3</span>
<span class="t" style="left:34.60px;top:214.32px;font-family:'Liberation Sans', sans-serif;font-size:10px;font-weight:normal;color:#217346;transform:scaleX(0.8270);">4</span>
<span class="t" style="left:34.60px;top:229.06px;font-family:'Liberation Sans', sans-serif;font-size:10px;font-weight:normal;color:#217346;transform:scaleX(0.8270);">5</span>
<span class="t" style="left:34.60px;top:243.78px;font-family:'Liberation Sans', sans-serif;font-size:10px;font-weight:normal;color:#217346;transform:scaleX(0.8270);">6</span>
<span class="t" style="left:34.60px;top:258.51px;font-family:'Liberation Sans', sans-serif;font-size:10px;font-weight:normal;color:#217346;transform:scaleX(0.8270);">7</span>
<span class="t" style="left:34.60px;top:273.25px;font-family:'Liberation Sans', sans-serif;font-size:10px;font-weight:normal;color:#217346;transform:scaleX(0.8270);">8</span>
<span class="t" style="left:34.60px;top:287.98px;font-family:'Liberation Sans', sans-serif;font-size:10px;font-weight:normal;color:#217346;transform:scaleX(0.8270);">9</span>
<span class="t" style="left:32.20px;top:302.70px;font-family:'Liberation Sans', sans-serif;font-size:10px;font-weight:normal;color:#217346;transform:scaleX(0.8449);">10</span>
<span class="t" style="left:32.20px;top:317.44px;font-family:'Liberation Sans', sans-serif;font-size:10px;font-weight:normal;color:#217346;transform:scaleX(0.9047);">11</span>
<span class="t" style="left:32.20px;top:332.17px;font-family:'Liberation Sans', sans-serif;font-size:10px;font-weight:normal;color:#217346;transform:scaleX(0.8449);">12</span>
<span class="t" style="left:32.20px;top:346.90px;font-family:'Liberation Sans', sans-serif;font-size:10px;font-weight:normal;color:#217346;transform:scaleX(0.8449);">13</span>
<span class="t" style="left:31.90px;top:361.93px;font-family:'Liberation Sans', sans-serif;font-size:10px;font-weight:normal;color:#333;transform:scaleX(0.8629);clip-path:inset(0 0 6px 0);">14</span>
<span class="t" style="left:109.60px;top:185.16px;font-family:'DejaVu Sans', 'Liberation Sans', sans-serif;font-size:9.3px;font-weight:bold;color:#000;transform:scaleX(0.9589);">Janvier</span>
<span class="t" style="left:199.80px;top:185.16px;font-family:'DejaVu Sans', 'Liberation Sans', sans-serif;font-size:9.3px;font-weight:normal;color:#000;transform:scaleX(1.0157);">20,0.0°F</span>
<span class="t" style="left:282.50px;top:185.16px;font-family:'DejaVu Sans', 'Liberation Sans', sans-serif;font-size:9.3px;font-weight:normal;color:#000;transform:scaleX(1.0107);">35,0.0°F</span>
<span class="t" style="left:371.70px;top:185.16px;font-family:'DejaVu Sans', 'Liberation Sans', sans-serif;font-size:9.3px;font-weight:normal;color:#000;transform:scaleX(0.9477);">jeudi</span>
<span class="t" style="left:109.60px;top:199.89px;font-family:'DejaVu Sans', 'Liberation Sans', sans-serif;font-size:9.3px;font-weight:bold;color:#000;transform:scaleX(0.9320);">Février</span>
<span class="t" style="left:199.80px;top:199.89px;font-family:'DejaVu Sans', 'Liberation Sans', sans-serif;font-size:9.3px;font-weight:normal;color:#000;transform:scaleX(1.0157);">23,0.0°F</span>
<span class="t" style="left:282.50px;top:199.89px;font-family:'DejaVu Sans', 'Liberation Sans', sans-serif;font-size:9.3px;font-weight:normal;color:#000;transform:scaleX(1.0107);">40,0.0°F</span>
<span class="t" style="left:350.70px;top:199.89px;font-family:'DejaVu Sans', 'Liberation Sans', sans-serif;font-size:9.3px;font-weight:normal;color:#000;transform:scaleX(0.9267);">dimanche</span>
<span class="t" style="left:109.60px;top:214.62px;font-family:'DejaVu Sans', 'Liberation Sans', sans-serif;font-size:9.3px;font-weight:bold;color:#000;transform:scaleX(0.8185);">Mars</span>
<span class="t" style="left:199.80px;top:214.62px;font-family:'DejaVu Sans', 'Liberation Sans', sans-serif;font-size:9.3px;font-weight:normal;color:#000;transform:scaleX(1.0157);">33,0.0°F</span>
<span class="t" style="left:282.50px;top:214.62px;font-family:'DejaVu Sans', 'Liberation Sans', sans-serif;font-size:9.3px;font-weight:normal;color:#000;transform:scaleX(1.0107);">52,0.0°F</span>
<span class="t" style="left:350.70px;top:214.62px;font-family:'DejaVu Sans', 'Liberation Sans', sans-serif;font-size:9.3px;font-weight:normal;color:#000;transform:scaleX(0.9267);">dimanche</span>
<span class="t" style="left:109.60px;top:229.35px;font-family:'DejaVu Sans', 'Liberation Sans', sans-serif;font-size:9.3px;font-weight:bold;color:#000;transform:scaleX(0.9209);">Avril</span>
<span class="t" style="left:199.80px;top:229.35px;font-family:'DejaVu Sans', 'Liberation Sans', sans-serif;font-size:9.3px;font-weight:normal;color:#000;transform:scaleX(1.0157);">43,0.0°F</span>
<span class="t" style="left:282.50px;top:229.35px;font-family:'DejaVu Sans', 'Liberation Sans', sans-serif;font-size:9.3px;font-weight:normal;color:#000;transform:scaleX(1.0107);">63,0.0°F</span>
<span class="t" style="left:353.20px;top:229.35px;font-family:'DejaVu Sans', 'Liberation Sans', sans-serif;font-size:9.3px;font-weight:normal;color:#000;transform:scaleX(0.9679);">mercredi</span>
<span class="t" style="left:109.60px;top:244.08px;font-family:'DejaVu Sans', 'Liberation Sans', sans-serif;font-size:9.3px;font-weight:bold;color:#000;transform:scaleX(0.8815);">Mai</span>
<span class="t" style="left:199.80px;top:244.08px;font-family:'DejaVu Sans', 'Liberation Sans', sans-serif;font-size:9.3px;font-weight:normal;color:#000;transform:scaleX(1.0157);">53,0.0°F</span>
<span class="t" style="left:282.50px;top:244.08px;font-family:'DejaVu Sans', 'Liberation Sans', sans-serif;font-size:9.3px;font-weight:normal;color:#000;transform:scaleX(1.0107);">74,0.0°F</span>
<span class="t" style="left:355.20px;top:244.08px;font-family:'DejaVu Sans', 'Liberation Sans', sans-serif;font-size:9.3px;font-weight:normal;color:#000;transform:scaleX(0.9304);">vendredi</span>
<span class="t" style="left:109.60px;top:258.81px;font-family:'DejaVu Sans', 'Liberation Sans', sans-serif;font-size:9.3px;font-weight:bold;color:#000;transform:scaleX(0.9804);">Juin</span>
<span class="t" style="left:199.80px;top:258.81px;font-family:'DejaVu Sans', 'Liberation Sans', sans-serif;font-size:9.3px;font-weight:normal;color:#000;transform:scaleX(1.0157);">62,0.0°F</span>
<span class="t" style="left:282.50px;top:258.81px;font-family:'DejaVu Sans', 'Liberation Sans', sans-serif;font-size:9.3px;font-weight:normal;color:#000;transform:scaleX(1.0107);">82,0.0°F</span>
<span class="t" style="left:372.50px;top:258.81px;font-family:'DejaVu Sans', 'Liberation Sans', sans-serif;font-size:9.3px;font-weight:normal;color:#000;transform:scaleX(0.9055);">lundi</span>
<span class="t" style="left:109.60px;top:273.55px;font-family:'DejaVu Sans', 'Liberation Sans', sans-serif;font-size:9.3px;font-weight:bold;color:#000;transform:scaleX(0.9542);">Juillet</span>
<span class="t" style="left:199.80px;top:273.55px;font-family:'DejaVu Sans', 'Liberation Sans', sans-serif;font-size:9.3px;font-weight:normal;color:#000;transform:scaleX(1.0157);">66,0.0°F</span>
<span class="t" style="left:282.50px;top:273.55px;font-family:'DejaVu Sans', 'Liberation Sans', sans-serif;font-size:9.3px;font-weight:normal;color:#000;transform:scaleX(1.0107);">85,0.0°F</span>
<span class="t" style="left:353.20px;top:273.55px;font-family:'DejaVu Sans', 'Liberation Sans', sans-serif;font-size:9.3px;font-weight:normal;color:#000;transform:scaleX(0.9679);">mercredi</span>
<span class="t" style="left:109.60px;top:288.28px;font-family:'DejaVu Sans', 'Liberation Sans', sans-serif;font-size:9.3px;font-weight:bold;color:#000;transform:scaleX(0.8720);">Août</span>
<span class="t" style="left:199.80px;top:288.28px;font-family:'DejaVu Sans', 'Liberation Sans', sans-serif;font-size:9.3px;font-weight:normal;color:#000;transform:scaleX(1.0157);">64,0.0°F</span>
<span class="t" style="left:282.50px;top:288.28px;font-family:'DejaVu Sans', 'Liberation Sans', sans-serif;font-size:9.3px;font-weight:normal;color:#000;transform:scaleX(1.0107);">84,0.0°F</span>
<span class="t" style="left:362.20px;top:288.28px;font-family:'DejaVu Sans', 'Liberation Sans', sans-serif;font-size:9.3px;font-weight:normal;color:#000;transform:scaleX(0.9168);">samedi</span>
<span class="t" style="left:109.60px;top:303.00px;font-family:'DejaVu Sans', 'Liberation Sans', sans-serif;font-size:9.3px;font-weight:bold;color:#000;transform:scaleX(0.8935);">Septembre</span>
<span class="t" style="left:199.80px;top:303.00px;font-family:'DejaVu Sans', 'Liberation Sans', sans-serif;font-size:9.3px;font-weight:normal;color:#000;transform:scaleX(1.0157);">55,0.0°F</span>
<span class="t" style="left:282.50px;top:303.00px;font-family:'DejaVu Sans', 'Liberation Sans', sans-serif;font-size:9.3px;font-weight:normal;color:#000;transform:scaleX(1.0107);">77,0.0°F</span>
<span class="t" style="left:367.70px;top:303.00px;font-family:'DejaVu Sans', 'Liberation Sans', sans-serif;font-size:9.3px;font-weight:normal;color:#000;transform:scaleX(0.9477);">mardi</span>
<span class="t" style="left:109.60px;top:317.74px;font-family:'DejaVu Sans', 'Liberation Sans', sans-serif;font-size:9.3px;font-weight:bold;color:#000;transform:scaleX(0.8972);">Octobre</span>
<span class="t" style="left:199.80px;top:317.74px;font-family:'DejaVu Sans', 'Liberation Sans', sans-serif;font-size:9.3px;font-weight:normal;color:#000;transform:scaleX(1.0157);">44,0.0°F</span>
<span class="t" style="left:282.50px;top:317.74px;font-family:'DejaVu Sans', 'Liberation Sans', sans-serif;font-size:9.3px;font-weight:normal;color:#000;transform:scaleX(1.0107);">65,0.0°F</span>
<span class="t" style="left:371.70px;top:317.74px;font-family:'DejaVu Sans', 'Liberation Sans', sans-serif;font-size:9.3px;font-weight:normal;color:#000;transform:scaleX(0.9477);">jeudi</span>
<span class="t" style="left:109.60px;top:332.47px;font-family:'DejaVu Sans', 'Liberation Sans', sans-serif;font-size:9.3px;font-weight:bold;color:#000;transform:scaleX(0.8925);">Novembre</span>
<span class="t" style="left:199.80px;top:332.47px;font-family:'DejaVu Sans', 'Liberation Sans', sans-serif;font-size:9.3px;font-weight:normal;color:#000;transform:scaleX(1.0157);">34,0.0°F</span>
<span class="t" style="left:282.50px;top:332.47px;font-family:'DejaVu Sans', 'Liberation Sans', sans-serif;font-size:9.3px;font-weight:normal;color:#000;transform:scaleX(1.0107);">51,0.0°F</span>
<span class="t" style="left:350.70px;top:332.47px;font-family:'DejaVu Sans', 'Liberation Sans', sans-serif;font-size:9.3px;font-weight:normal;color:#000;transform:scaleX(0.9267);">dimanche</span>
<span class="t" style="left:109.60px;top:347.20px;font-family:'DejaVu Sans', 'Liberation Sans', sans-serif;font-size:9.3px;font-weight:bold;color:#000;transform:scaleX(0.9043);">Décembre</span>
<span class="t" style="left:199.80px;top:347.20px;font-family:'DejaVu Sans', 'Liberation Sans', sans-serif;font-size:9.3px;font-weight:normal;color:#000;transform:scaleX(1.0157);">35,0.0°F</span>
<span class="t" style="left:282.50px;top:347.20px;font-family:'DejaVu Sans', 'Liberation Sans', sans-serif;font-size:9.3px;font-weight:normal;color:#000;transform:scaleX(1.0107);">40,0.0°F</span>
<span class="t" style="left:367.70px;top:347.20px;font-family:'DejaVu Sans', 'Liberation Sans', sans-serif;font-size:9.3px;font-weight:normal;color:#000;transform:scaleX(0.9477);">mardi</span>
<span class="t" style="left:109.50px;top:127.00px;font-family:'Liberation Sans', sans-serif;font-size:8.5px;font-weight:normal;color:#555;transform:scaleX(0.8960);">1,78 Centimètres</span>
<span class="t" style="left:77.50px;top:369.50px;font-family:'Liberation Sans', sans-serif;font-size:8.5px;font-weight:normal;color:#555;transform:scaleX(0.9501);">Feuil2</span>
<span class="t" style="left:118.75px;top:369.50px;font-family:'Liberation Sans', sans-serif;font-size:8.5px;font-weight:normal;color:#555;transform:scaleX(0.9393);">Feuil7</span>
<span class="t" style="left:159.50px;top:369.50px;font-family:'Liberation Sans', sans-serif;font-size:8.5px;font-weight:normal;color:#555;transform:scaleX(0.9393);">Feuil8</span>
<span class="t" style="left:241.75px;top:369.50px;font-family:'Liberation Sans', sans-serif;font-size:8.5px;font-weight:normal;color:#555;transform:scaleX(0.9501);">Feuil6</span>
<span class="t" style="left:282.50px;top:369.50px;font-family:'Liberation Sans', sans-serif;font-size:8.5px;font-weight:normal;color:#555;transform:scaleX(0.9501);">Feuil3</span>
<span class="t" style="left:199.50px;top:369.50px;font-family:'Liberation Sans', sans-serif;font-size:8.5px;font-weight:bold;color:#217346;transform:scaleX(1.0076);">Feuil5</span>
<span class="t" style="left:55.00px;top:368.50px;font-family:'Liberation Sans', sans-serif;font-size:8.5px;font-weight:bold;color:#217346;transform:scaleX(1.0573);">...</span>
<span class="t" style="left:7.00px;top:387.80px;font-family:'Liberation Sans', sans-serif;font-size:8px;font-weight:normal;color:#3a3a3a;transform:scaleX(0.8860);">Prêt</span>
<span class="t" style="left:56.25px;top:387.80px;font-family:'Liberation Sans', sans-serif;font-size:8px;font-weight:normal;color:#3a3a3a;transform:scaleX(0.8934);">Page : 1 sur 1</span>
<span class="t" style="left:178.75px;top:387.80px;font-family:'Liberation Sans', sans-serif;font-size:8px;font-weight:normal;color:#3a3a3a;transform:scaleX(0.9565);">Moyenne : mardi</span>
<span class="t" style="left:247.00px;top:387.80px;font-family:'Liberation Sans', sans-serif;font-size:8px;font-weight:normal;color:#3a3a3a;transform:scaleX(0.9394);">Nb (non vides) : 12</span>
<span class="t" style="left:321.25px;top:387.80px;font-family:'Liberation Sans', sans-serif;font-size:8px;font-weight:normal;color:#3a3a3a;transform:scaleX(0.9079);">Somme : samedi</span>
<span class="t" style="left:567.00px;top:387.80px;font-family:'Liberation Sans', sans-serif;font-size:8px;font-weight:normal;color:#3a3a3a;transform:scaleX(0.8705);">100 %</span>
</body></html>
